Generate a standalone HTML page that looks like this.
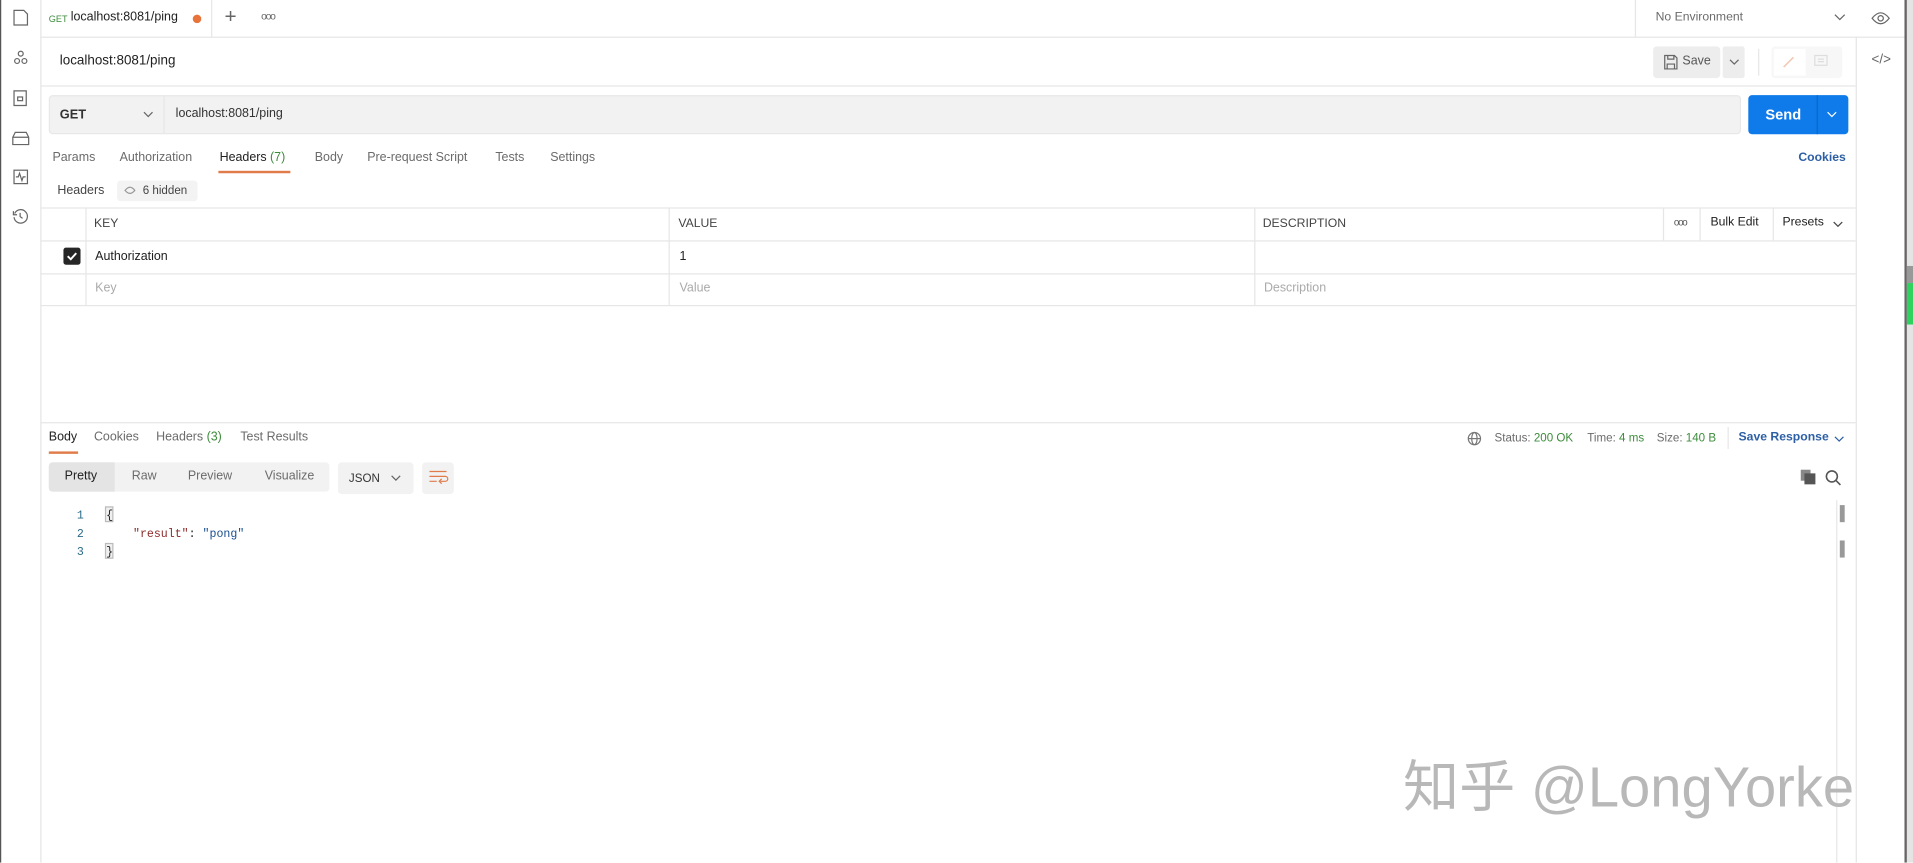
<!DOCTYPE html>
<html><head><meta charset="utf-8"><style>
*{margin:0;padding:0;box-sizing:border-box}
html,body{width:1913px;height:863px;overflow:hidden;background:#fff}
#w{position:absolute;left:0;top:0;width:1568px;height:707px;transform:scale(1.22003);transform-origin:0 0;font-family:"Liberation Sans","Noto Sans CJK SC",sans-serif;font-size:10.2px;color:#212121}
.a{position:absolute;white-space:nowrap}
.g{color:#6b6b6b}
.ln{position:absolute;background:#e6e6e6}
svg{position:absolute;overflow:visible}
</style></head><body><div id="w">
<div class="a" style="left:0;top:0;width:1px;height:707px;background:#555"></div>
<div class="ln" style="left:33px;top:0;width:1px;height:707px"></div>
<svg style="left:11px;top:8px" width="12" height="13" fill="none" stroke="#666" stroke-width="1"><path d="M.5 .5h8l3 3v9h-11z"/></svg>
<svg style="left:11px;top:41px" width="12" height="12" fill="none" stroke="#666"><circle cx="6" cy="3" r="2"/><circle cx="3" cy="9" r="2"/><circle cx="9" cy="9" r="2"/></svg>
<svg style="left:11px;top:74px" width="12" height="13" fill="none" stroke="#666"><path d="M.5 .5h10v12h-10z"/><rect x="3.5" y="5.5" width="4" height="3"/></svg>
<svg style="left:10px;top:108px" width="14" height="11" fill="none" stroke="#666"><path d="M.5 4.5l2-4h9l2 4v6h-13z M.5 4.5h13"/></svg>
<svg style="left:11px;top:139px" width="12" height="12" fill="none" stroke="#666"><rect x=".5" y=".5" width="11" height="11"/><path d="M2 6h2l1-3 2 6 1-3h2"/></svg>
<svg style="left:10px;top:171px" width="13" height="13" fill="none" stroke="#666"><path d="M2 4a5.5 5.5 0 1 1 -.5 3"/><path d="M6.5 3.5v3l2 1.5"/><path d="M1 2v3h3"/></svg>
<div class="ln" style="left:33px;top:30px;width:1535px;height:1px"></div>
<div class="ln" style="left:173px;top:0;width:1px;height:30px"></div>
<div class="a" style="left:40px;top:11px;font-size:7.5px;color:#3c8c3c">GET</div>
<div class="a" style="left:58px;top:9px;font-size:10.2px">localhost:8081/ping</div>
<div class="a" style="left:158px;top:12px;width:7px;height:7px;border-radius:50%;background:#e8743b"></div>
<div class="a" style="left:184px;top:4px;font-size:17px;color:#666;font-weight:300">+</div>
<div class="a" style="left:214px;top:8px;font-size:8.5px;color:#666;letter-spacing:-1px">ooo</div>
<div class="ln" style="left:1340px;top:0;width:1px;height:30px"></div>
<div class="a g" style="left:1357px;top:9px;font-size:10px">No Environment</div>
<svg style="left:1504px;top:12px" width="8" height="5" fill="none" stroke="#666"><path d="M0 0l4 4 4-4"/></svg>
<svg style="left:1534px;top:10px" width="15" height="10" fill="none" stroke="#666"><path d="M.5 5q7-9 14 0q-7 9-14 0z"/><circle cx="7.5" cy="5" r="2.2"/></svg>
<div class="ln" style="left:1521px;top:30px;width:1px;height:677px"></div>
<div class="a" style="left:1534px;top:43px;font-size:11px;color:#666">&lt;/&gt;</div>
<div class="a" style="left:1561px;top:0;width:2px;height:707px;background:#666"></div>
<div class="a" style="left:1563px;top:0;width:5px;height:707px;background:#e4e4e4"></div>
<div class="a" style="left:1563px;top:218px;width:5px;height:14px;background:#999"></div>
<div class="a" style="left:1563px;top:232px;width:5px;height:34px;background:#2ed35f"></div>
<div class="a" style="left:49px;top:44px;font-size:11px">localhost:8081/ping</div>
<div class="ln" style="left:33px;top:70px;width:1488px;height:1px"></div>
<div class="a" style="left:1355px;top:38px;width:55px;height:26px;background:#ededed;border-radius:3px"></div>
<svg style="left:1364px;top:45px" width="11" height="12" fill="none" stroke="#666"><path d="M.5 .5h8l2 2v9h-10z"/><path d="M3 .5v3h5v-3M2.5 11.5v-4h6v4"/></svg>
<div class="a" style="left:1379px;top:45px;font-size:10.2px;color:#555">Save</div>
<div class="a" style="left:1412px;top:38px;width:18px;height:26px;background:#ededed;border-radius:2px"></div>
<svg style="left:1418px;top:49px" width="7" height="4" fill="none" stroke="#666"><path d="M0 0l3.5 3.5 3.5-3.5"/></svg>
<div class="ln" style="left:1441px;top:40px;width:1px;height:22px"></div>
<div class="a" style="left:1452px;top:38px;width:58px;height:26px;background:#f7f7f7;border-radius:3px"></div>
<div class="a" style="left:1454px;top:40px;width:26px;height:22px;background:#fff"></div>
<svg style="left:1461px;top:45px" width="11" height="11" fill="none" stroke="#f2c9b4" stroke-width="1.3"><path d="M1 10l8-8"/></svg>
<svg style="left:1487px;top:45px" width="11" height="10" fill="none" stroke="#ddd"><rect x=".5" y=".5" width="10" height="8"/><path d="M3 3.5h5M3 5.5h5"/></svg>
<div class="a" style="left:40px;top:78px;width:1387px;height:32px;background:#f2f2f2;border:1px solid #e8e8e8;border-radius:3px"></div>
<div class="ln" style="left:134px;top:79px;width:1px;height:30px"></div>
<div class="a" style="left:49px;top:88px;font-size:10.5px;font-weight:bold;color:#333">GET</div>
<svg style="left:118px;top:92px" width="7" height="4" fill="none" stroke="#666"><path d="M0 0l3.5 3.5 3.5-3.5"/></svg>
<div class="a" style="left:144px;top:88px;font-size:10.2px;color:#333">localhost:8081/ping</div>
<div class="a" style="left:1433px;top:78px;width:82px;height:32px;background:#0f7aea;border-radius:3px"></div>
<div class="a" style="left:1489px;top:78px;width:1px;height:32px;background:#0b68c8"></div>
<div class="a" style="left:1447px;top:87px;font-size:12px;font-weight:bold;color:#fff">Send</div>
<svg style="left:1498px;top:92px" width="7" height="4" fill="none" stroke="#fff"><path d="M0 0l3.5 3.5 3.5-3.5"/></svg>
<div class="a g" style="left:43px;top:124px">Params</div>
<div class="a g" style="left:98px;top:124px">Authorization</div>
<div class="a" style="left:180px;top:124px">Headers <span style="color:#3c8c3c">(7)</span></div>
<div class="a" style="left:179px;top:140px;width:59px;height:2px;background:#e07b4a"></div>
<div class="a g" style="left:258px;top:124px">Body</div>
<div class="a g" style="left:301px;top:124px">Pre-request Script</div>
<div class="a g" style="left:406px;top:124px">Tests</div>
<div class="a g" style="left:451px;top:124px">Settings</div>
<div class="a" style="left:1474px;top:124px;color:#2d5fa5;font-weight:bold;font-size:10px">Cookies</div>
<div class="a" style="left:47px;top:151px;color:#444">Headers</div>
<div class="a" style="left:96px;top:148px;width:66px;height:17px;background:#f3f3f3;border-radius:3px"></div>
<svg style="left:102px;top:153px" width="9" height="6" fill="none" stroke="#999"><path d="M.5 3q4-5 8 0q-4 5-8 0z"/></svg>
<div class="a" style="left:117px;top:151px;font-size:9.5px;color:#444">6 hidden</div>
<div class="ln" style="left:33px;top:170px;width:1488px;height:1px"></div>
<div class="ln" style="left:33px;top:197px;width:1488px;height:1px"></div>
<div class="ln" style="left:33px;top:224px;width:1488px;height:1px"></div>
<div class="ln" style="left:33px;top:250px;width:1488px;height:1px"></div>
<div class="ln" style="left:70px;top:170px;width:1px;height:80px"></div>
<div class="ln" style="left:548px;top:170px;width:1px;height:80px"></div>
<div class="ln" style="left:1028px;top:170px;width:1px;height:80px"></div>
<div class="ln" style="left:1363px;top:170px;width:1px;height:27px"></div>
<div class="ln" style="left:1393px;top:170px;width:1px;height:27px"></div>
<div class="ln" style="left:1453px;top:170px;width:1px;height:27px"></div>
<div class="a" style="left:77px;top:178px;font-size:10px;color:#444">KEY</div>
<div class="a" style="left:556px;top:178px;font-size:10px;color:#444">VALUE</div>
<div class="a" style="left:1035px;top:178px;font-size:10px;color:#444">DESCRIPTION</div>
<div class="a" style="left:1372px;top:178px;font-size:8px;color:#555;letter-spacing:-1px">ooo</div>
<div class="a" style="left:1402px;top:177px;font-size:10px">Bulk Edit</div>
<div class="a" style="left:1461px;top:177px;font-size:10px">Presets</div>
<svg style="left:1503px;top:182px" width="7" height="4" fill="none" stroke="#444"><path d="M0 0l3.5 3.5 3.5-3.5"/></svg>
<div class="a" style="left:52px;top:203px;width:14px;height:14px;background:#262626;border-radius:2px"></div>
<svg style="left:54px;top:205px" width="10" height="10" fill="none" stroke="#fff" stroke-width="1.6"><path d="M1.5 5l2.5 2.5 4.5-5"/></svg>
<div class="a" style="left:78px;top:205px">Authorization</div>
<div class="a" style="left:557px;top:205px">1</div>
<div class="a" style="left:78px;top:231px;color:#aaa">Key</div>
<div class="a" style="left:557px;top:231px;color:#aaa">Value</div>
<div class="a" style="left:1036px;top:231px;color:#aaa">Description</div>
<div class="ln" style="left:33px;top:346px;width:1488px;height:1px"></div>
<div class="a" style="left:40px;top:353px">Body</div>
<div class="a" style="left:40px;top:370px;width:24px;height:2px;background:#e07b4a"></div>
<div class="a g" style="left:77px;top:353px">Cookies</div>
<div class="a g" style="left:128px;top:353px">Headers <span style="color:#3c8c3c">(3)</span></div>
<div class="a g" style="left:197px;top:353px">Test Results</div>
<svg style="left:1203px;top:354px" width="11" height="11" fill="none" stroke="#777"><circle cx="5.5" cy="5.5" r="5"/><ellipse cx="5.5" cy="5.5" rx="2.2" ry="5"/><path d="M.5 5.5h10"/></svg>
<div class="a g" style="left:1225px;top:354px;font-size:9.5px">Status: <span style="color:#3c8c3c">200 OK</span></div>
<div class="a g" style="left:1301px;top:354px;font-size:9.5px">Time: <span style="color:#3c8c3c">4 ms</span></div>
<div class="a g" style="left:1358px;top:354px;font-size:9.5px">Size: <span style="color:#3c8c3c">140 B</span></div>
<div class="ln" style="left:1416px;top:350px;width:1px;height:18px"></div>
<div class="a" style="left:1425px;top:353px;font-size:10px;font-weight:bold;color:#2d5fa5">Save Response</div>
<svg style="left:1504px;top:358px" width="7" height="4" fill="none" stroke="#2d5fa5"><path d="M0 0l3.5 3.5 3.5-3.5"/></svg>
<div class="a" style="left:40px;top:379px;width:230px;height:24px;background:#f2f2f2;border-radius:3px"></div>
<div class="a" style="left:40px;top:379px;width:54px;height:24px;background:#e4e4e4;border-radius:3px 0 0 3px"></div>
<div class="a" style="left:53px;top:385px">Pretty</div>
<div class="a g" style="left:108px;top:385px">Raw</div>
<div class="a g" style="left:154px;top:385px">Preview</div>
<div class="a g" style="left:217px;top:385px">Visualize</div>
<div class="a" style="left:277px;top:379px;width:62px;height:26px;background:#f2f2f2;border-radius:3px"></div>
<div class="a" style="left:286px;top:387px;font-size:9.5px;color:#333">JSON</div>
<svg style="left:321px;top:390px" width="7" height="4" fill="none" stroke="#666"><path d="M0 0l3.5 3.5 3.5-3.5"/></svg>
<div class="a" style="left:346px;top:379px;width:26px;height:26px;background:#f2f2f2;border-radius:3px"></div>
<svg style="left:352px;top:385px" width="14" height="12" fill="none" stroke="#e07b4a"><path d="M0 1.5h14M0 5.5h13a2 2 0 0 1 0 4h-4M0 9.5h6"/><path d="M10 7.5l-2 2 2 2"/></svg>
<svg style="left:1476px;top:385px" width="12" height="12"><rect x="0" y="0" width="8" height="9" fill="#888"/><rect x="3" y="3" width="9" height="9" fill="#555"/></svg>
<svg style="left:1496px;top:385px" width="13" height="13" fill="none" stroke="#555" stroke-width="1.3"><circle cx="5.5" cy="5.5" r="4.5"/><path d="M9 9l3.5 3.5"/></svg>
<div class="a" style="left:63px;top:415px;font-family:'Liberation Mono',monospace;font-size:9.5px;line-height:15px;color:#2a6a8a">1<br>2<br>3</div>
<div class="a" style="left:86px;top:415px;width:7px;height:13px;border:1px solid #bbb;background:#f0f0f0"></div>
<div class="a" style="left:86px;top:445px;width:7px;height:13px;border:1px solid #bbb;background:#f0f0f0"></div>
<div class="a" style="left:87px;top:415px;font-family:'Liberation Mono',monospace;font-size:9.5px;line-height:15px">{<br><span style="padding-left:22px;color:#8b2a2a">"result"</span>: <span style="color:#1a4f8f">"pong"</span><br>}</div>
<div class="ln" style="left:1505px;top:410px;width:1px;height:297px"></div>
<div class="a" style="left:1508px;top:414px;width:4px;height:14px;background:#999"></div>
<div class="a" style="left:1508px;top:443px;width:4px;height:14px;background:#999"></div>
<div class="a" style="left:1150px;top:609px;font-size:46px;color:#b8b8b8;font-family:'Liberation Sans','Noto Sans CJK SC',sans-serif">知乎 @LongYorke</div>
</div></body></html>
